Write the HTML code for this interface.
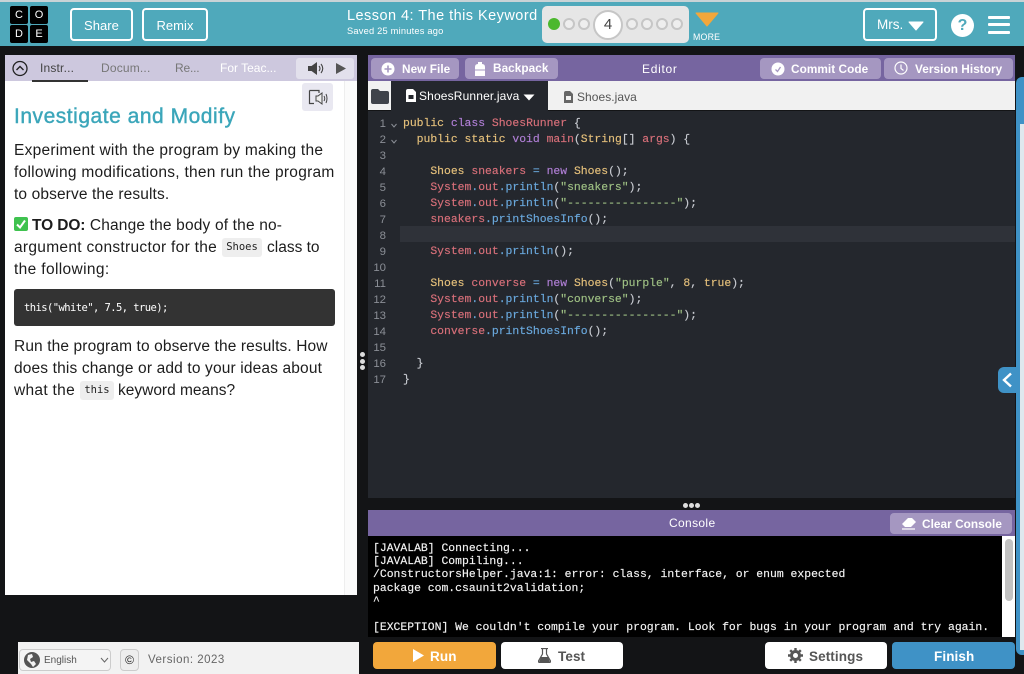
<!DOCTYPE html>
<html><head><meta charset="utf-8">
<style>
html,body{margin:0;padding:0;width:1024px;height:674px;overflow:hidden;background:#131416}
body{position:relative;font-family:"Liberation Sans",sans-serif}
.a,.t{position:absolute}
.t{white-space:nowrap}
.btn{position:absolute;border:2px solid #fff;border-radius:4px;box-sizing:border-box;color:#fff;text-align:center;font-size:13px;letter-spacing:.05px}
.p{position:absolute;background:#a597c1;border-radius:4px;color:#fff;font-weight:bold;font-size:11.8px;letter-spacing:.05px;white-space:nowrap}
.body{font-size:15.5px;color:#1d1d1d;left:14px;line-height:18px}
.code{font:11.4px/16px "Liberation Mono",monospace;white-space:pre;position:absolute;left:403px;height:16px;-webkit-text-stroke:.15px}
.n{font:11.4px/16px "Liberation Sans",sans-serif;color:#8b8f96;position:absolute;left:372px;width:14px;text-align:right}
.k{color:#e5c07b}.v{color:#b07fd6}.r{color:#d9707a}.b{color:#6aa9de}.g{color:#9fc184}.w{color:#c9ccd2}
.ink{font:11.42px/13.2px "Liberation Mono",monospace;color:#f4f4f4;white-space:pre;position:absolute;left:373px;top:542px;-webkit-text-stroke:.15px}
.dot{position:absolute;top:18px;width:8px;height:8px;border-radius:50%;background:#eee;border:2px solid #c6c6c6}
.sq{position:absolute;width:18px;height:18px;background:#000;border-radius:2px;color:#fff;font-size:11px;text-align:center;line-height:18px}
.bar{position:absolute;left:988px;width:22px;height:3px;background:#fff;border-radius:1px}
.tab{top:61px;font-size:12px;letter-spacing:.18px;line-height:15px}
.bb{top:649px;font-size:13.5px;font-weight:bold;letter-spacing:.1px;line-height:16px}
.grip{position:absolute;width:5px;height:5px;border-radius:50%;background:#ddd}
</style></head><body>

<!-- header -->
<div class="a" style="left:0;top:0;width:1024px;height:2px;background:#c8d3d6"></div>
<div class="a" style="left:0;top:2px;width:1024px;height:44px;background:#4fa9bb"></div>
<div class="sq" style="left:10px;top:6px">C</div>
<div class="sq" style="left:30px;top:6px">O</div>
<div class="sq" style="left:10px;top:25px">D</div>
<div class="sq" style="left:30px;top:25px">E</div>
<div class="btn" style="left:70px;top:8px;width:63px;height:33px;line-height:31px">Share</div>
<div class="btn" style="left:142px;top:8px;width:66px;height:33px;line-height:31px">Remix</div>
<div class="t" style="left:347px;top:7px;color:#fff;font-size:14.5px;letter-spacing:.46px;line-height:18px">Lesson 4: The this Keyword</div>
<div class="t" style="left:347px;top:25px;color:#fff;font-size:9.3px;letter-spacing:.2px;line-height:13px">Saved 25 minutes ago</div>
<div class="a" style="left:542px;top:6px;width:147px;height:37px;background:#e6e6e6;border-radius:5px"></div>
<div class="a" style="left:548px;top:18px;width:12px;height:12px;border-radius:50%;background:#4cb82e"></div>
<div class="dot" style="left:563px"></div>
<div class="dot" style="left:578px"></div>
<div class="a" style="left:593px;top:10px;width:26px;height:26px;border-radius:50%;background:#fff;border:2px solid #c6c6c6;text-align:center;font-size:15px;line-height:26px;color:#444">4</div>
<div class="dot" style="left:626px"></div>
<div class="dot" style="left:641px"></div>
<div class="dot" style="left:656px"></div>
<div class="dot" style="left:671px"></div>
<svg class="a" style="left:695px;top:12px" width="24" height="15"><path d="M1 1H23L12 14Z" fill="#f2a73b" stroke="#f2a73b" stroke-linejoin="round"/></svg>
<div class="t" style="left:693px;top:31px;color:#fff;font-size:8.8px;letter-spacing:.2px;line-height:12px">MORE</div>
<div class="btn" style="left:863px;top:8px;width:74px;height:33px"></div>
<div class="t" style="left:877px;top:16px;color:#fff;font-size:13.5px;line-height:17px">Mrs.</div>
<svg class="a" style="left:908px;top:21px" width="16" height="10"><path d="M1 1H15L8 9Z" fill="#fff" stroke="#fff" stroke-linejoin="round"/></svg>
<div class="a" style="left:951px;top:14px;width:23px;height:23px;border-radius:50%;background:#fff;color:#4fa9bb;font-weight:bold;font-size:16px;text-align:center;line-height:23px">?</div>
<div class="bar" style="top:16px"></div>
<div class="bar" style="top:23px"></div>
<div class="bar" style="top:31px"></div>

<!-- left panel -->
<div class="a" style="left:5px;top:55px;width:352px;height:540px;background:#fff"></div>
<div class="a" style="left:344px;top:81px;width:13px;height:514px;background:#fbfbfb;border-left:1px solid #eee;box-sizing:border-box"></div>
<div class="a" style="left:5px;top:55px;width:352px;height:26px;background:#cdc8de"></div>
<svg class="a" style="left:12px;top:60px" width="17" height="17"><circle cx="8" cy="8.5" r="7" fill="none" stroke="#222" stroke-width="1.3"/><path d="M4.5 10L8 6.5 11.5 10" fill="none" stroke="#222" stroke-width="1.4"/></svg>
<div class="t tab" style="left:40px;color:#444">Instr...</div>
<div class="a" style="left:32px;top:80px;width:56px;height:2px;background:#333"></div>
<div class="t tab" style="left:101px;color:#777">Docum...</div>
<div class="t tab" style="left:175px;color:#777;letter-spacing:-.2px">Re...</div>
<div class="t tab" style="left:220px;color:#fff;letter-spacing:0">For Teac...</div>
<div class="a" style="left:296px;top:58px;width:58px;height:21px;background:#e2e0ec;border-radius:3px"></div>
<svg class="a" style="left:307px;top:60px" width="40" height="17"><path d="M1 6H4.5L10 2V15L4.5 11H1Z" fill="#444"/><path d="M12 6Q14 8.5 12 11M14 4Q17.5 8.5 14 13" fill="none" stroke="#444" stroke-width="1.1"/><path d="M29 3L39 8.5 29 14Z" fill="#555"/></svg>
<div class="a" style="left:302px;top:83px;width:31px;height:28px;background:#e9e8f1;border-radius:3px"></div>
<svg class="a" style="left:308px;top:89px" width="20" height="17"><path d="M1.5 1.5H11V4M6 14.5H1.5V1.5" fill="none" stroke="#444" stroke-width="1.2"/><path d="M8 7H10L14 4V15L10 12H8Z" fill="#eee" stroke="#444"/><path d="M16 7Q17.5 9.5 16 12M18 5Q20 9.5 18 14" fill="none" stroke="#444"/></svg>

<div class="t" style="left:14px;top:104px;font-size:21px;color:#3ba6ba;letter-spacing:.52px;line-height:26px;-webkit-text-stroke:.4px #3ba6ba">Investigate and Modify</div>
<div class="t body" style="top:142px;letter-spacing:.25px">Experiment with the program by making the</div>
<div class="t body" style="top:164px;letter-spacing:.27px">following modifications, then run the program</div>
<div class="t body" style="top:186px;letter-spacing:.12px">to observe the results.</div>
<svg class="a" style="left:14px;top:217px" width="14" height="14"><rect width="14" height="14" rx="2" fill="#3fc24f"/><path d="M3 7.5L6 10.5 11 3.5" fill="none" stroke="#fff" stroke-width="2"/></svg>
<div class="t body" style="left:32px;top:217px;letter-spacing:.17px"><b style="letter-spacing:-.1px">TO DO:</b> Change the body of the no-</div>
<div class="t body" style="top:239px;letter-spacing:.3px">argument constructor for the</div>
<div class="a" style="left:222px;top:238px;width:40px;height:19px;background:#eee;border-radius:3px;font:10.5px/19px 'DejaVu Sans Mono',monospace;color:#222;text-align:center">Shoes</div>
<div class="t body" style="left:267px;top:239px">class to</div>
<div class="t body" style="top:261px;letter-spacing:.36px">the following:</div>
<div class="a" style="left:14px;top:289px;width:321px;height:37px;background:#333;border-radius:3px"></div>
<div class="t" style="left:24px;top:301px;font:10.5px/14px 'DejaVu Sans Mono',monospace;color:#fff;letter-spacing:-.57px">this("white", 7.5, true);</div>
<div class="t body" style="top:338px;letter-spacing:.12px">Run the program to observe the results. How</div>
<div class="t body" style="top:360px;letter-spacing:.15px">does this change or add to your ideas about</div>
<div class="t body" style="top:382px;letter-spacing:.3px">what the</div>
<div class="a" style="left:80px;top:381px;width:34px;height:19px;background:#eee;border-radius:3px;font:10.5px/19px 'DejaVu Sans Mono',monospace;color:#222;text-align:center">this</div>
<div class="t body" style="left:118px;top:382px">keyword means?</div>

<!-- splitter -->
<div class="grip" style="left:360px;top:352px"></div>
<div class="grip" style="left:360px;top:359px"></div>
<div class="grip" style="left:360px;top:365px"></div>

<!-- footer left -->
<div class="a" style="left:18px;top:642px;width:341px;height:32px;background:#f2f2f2"></div>
<div class="a" style="left:19px;top:649px;width:92px;height:22px;background:#f4f4f4;border:1px solid #ccc;border-radius:4px;box-sizing:border-box"></div>
<svg class="a" style="left:24px;top:652px" width="16" height="16"><circle cx="8" cy="8" r="8" fill="#555"/><path d="M4 3L8 2 9 5 6 7 7 10 10 9 12 12 9 15 7 12 3 8Z" fill="#f2f2f2"/></svg>
<div class="t" style="left:44px;top:654px;font-size:10px;color:#555;line-height:14px">English</div>
<svg class="a" style="left:100px;top:657px" width="9" height="6"><path d="M1 1L4.5 5 8 1" fill="none" stroke="#666"/></svg>
<div class="a" style="left:120px;top:649px;width:19px;height:22px;background:#eee;border:1px solid #ccc;border-radius:4px;box-sizing:border-box;font-size:12px;line-height:21px;text-align:center;color:#222">©</div>
<div class="t" style="left:148px;top:653px;font-size:11.5px;color:#666;letter-spacing:.5px;line-height:15px">Version: 2023</div>

<!-- editor header -->
<div class="a" style="left:368px;top:55px;width:647px;height:26px;background:#7665a0"></div>
<div class="p" style="left:371px;top:58px;width:88px;height:21px;line-height:23px;text-indent:31px">New File</div>
<svg class="a" style="left:381px;top:62px" width="14" height="14"><circle cx="7" cy="7" r="6.5" fill="#fff"/><path d="M7 3.5V10.5M3.5 7H10.5" stroke="#a597c1" stroke-width="1.6"/></svg>
<div class="p" style="left:465px;top:58px;width:93px;height:21px;line-height:21px;text-indent:28px">Backpack</div>
<svg class="a" style="left:474px;top:62px" width="12" height="14"><path d="M1 5Q1 2 4 2V0H8V2Q11 2 11 5V14H1Z" fill="#fff"/><path d="M1 8H11" stroke="#a597c1"/></svg>
<div class="t" style="left:642px;top:62px;font-size:12px;color:#fff;letter-spacing:.7px;line-height:15px">Editor</div>
<div class="p" style="left:760px;top:58px;width:121px;height:21px;line-height:23px;text-indent:31px">Commit Code</div>
<svg class="a" style="left:771px;top:62px" width="14" height="14"><circle cx="7" cy="7" r="6.5" fill="#fff"/><path d="M4.5 7.5L6.5 9.5 9.5 5" fill="none" stroke="#a597c1" stroke-width="1.3"/></svg>
<div class="p" style="left:884px;top:58px;width:129px;height:21px;line-height:23px;text-indent:31px">Version History</div>
<svg class="a" style="left:894px;top:61px" width="14" height="14"><circle cx="7" cy="7" r="6" fill="none" stroke="#fff" stroke-width="1.2"/><path d="M7 3.5V7.5L9.5 9.5" fill="none" stroke="#fff" stroke-width="1.2"/></svg>

<!-- tabs -->
<div class="a" style="left:368px;top:81px;width:647px;height:29px;background:#f1f1f1"></div>
<div class="a" style="left:391px;top:81px;width:157px;height:30px;background:#24272d"></div>
<svg class="a" style="left:371px;top:88px" width="18" height="16"><path d="M0 3Q0 1 2 1H7L9 3H16Q18 3 18 5V14Q18 16 16 16H2Q0 16 0 14Z" fill="#3f434a"/></svg>
<svg class="a" style="left:406px;top:89px" width="10" height="13"><path d="M0 2Q0 0 2 0H7L10 3V13H0Z" fill="#fff"/><rect x="2.5" y="6" width="5" height="4" fill="#24272d"/></svg>
<div class="t" style="left:419px;top:89px;font-size:12px;color:#fff;letter-spacing:.15px;line-height:15px">ShoesRunner.java</div>
<svg class="a" style="left:523px;top:94px" width="12" height="7"><path d="M.5.5H11.5L6 6.5Z" fill="#fff"/></svg>
<svg class="a" style="left:564px;top:91px" width="9" height="12"><path d="M0 2Q0 0 2 0H6L9 3V12H0Z" fill="#666"/><rect x="2" y="5" width="5" height="4" fill="#f1f1f1"/></svg>
<div class="t" style="left:577px;top:90px;font-size:12px;color:#555;letter-spacing:.05px;line-height:15px">Shoes.java</div>

<!-- code area -->
<div class="a" style="left:368px;top:111px;width:647px;height:387px;background:#24272d"></div>
<div class="a" style="left:400px;top:226px;width:615px;height:16px;background:#2f3239"></div>

<div class="n" style="top:116px">1</div><div class="n" style="top:132px">2</div><div class="n" style="top:148px">3</div><div class="n" style="top:164px">4</div><div class="n" style="top:180px">5</div><div class="n" style="top:196px">6</div><div class="n" style="top:212px">7</div><div class="n" style="top:228px">8</div><div class="n" style="top:244px">9</div><div class="n" style="top:260px">10</div><div class="n" style="top:276px">11</div><div class="n" style="top:292px">12</div><div class="n" style="top:308px">13</div><div class="n" style="top:324px">14</div><div class="n" style="top:340px">15</div><div class="n" style="top:356px">16</div><div class="n" style="top:372px">17</div>
<svg class="a" style="left:391px;top:123px" width="6" height="5"><path d="M.5 1L3 4 5.5 1" fill="none" stroke="#8b8f96"/></svg>
<svg class="a" style="left:391px;top:139px" width="6" height="5"><path d="M.5 1L3 4 5.5 1" fill="none" stroke="#8b8f96"/></svg>

<div class="code w" style="top:116px"><span class="k">public</span> <span class="v">class</span> <span class="r">ShoesRunner</span> {</div>
<div class="code w" style="top:132px">  <span class="k">public static</span> <span class="v">void</span> <span class="r">main</span>(<span class="k">String</span>[] <span class="r">args</span>) {</div>
<div class="code w" style="top:164px">    <span class="k">Shoes</span> <span class="r">sneakers</span> <span class="b">=</span> <span class="v">new</span> <span class="k">Shoes</span>();</div>
<div class="code w" style="top:180px">    <span class="r">System</span><span class="b">.</span><span class="r">out</span><span class="b">.println</span>(<span class="g">"sneakers"</span>);</div>
<div class="code w" style="top:196px">    <span class="r">System</span><span class="b">.</span><span class="r">out</span><span class="b">.println</span>(<span class="g">"----------------"</span>);</div>
<div class="code w" style="top:212px">    <span class="r">sneakers</span><span class="b">.printShoesInfo</span>();</div>
<div class="code w" style="top:244px">    <span class="r">System</span><span class="b">.</span><span class="r">out</span><span class="b">.println</span>();</div>
<div class="code w" style="top:276px">    <span class="k">Shoes</span> <span class="r">converse</span> <span class="b">=</span> <span class="v">new</span> <span class="k">Shoes</span>(<span class="g">"purple"</span>, <span class="k">8</span>, <span class="k">true</span>);</div>
<div class="code w" style="top:292px">    <span class="r">System</span><span class="b">.</span><span class="r">out</span><span class="b">.println</span>(<span class="g">"converse"</span>);</div>
<div class="code w" style="top:308px">    <span class="r">System</span><span class="b">.</span><span class="r">out</span><span class="b">.println</span>(<span class="g">"----------------"</span>);</div>
<div class="code w" style="top:324px">    <span class="r">converse</span><span class="b">.printShoesInfo</span>();</div>
<div class="code w" style="top:356px">  }</div>
<div class="code w" style="top:372px">}</div>

<!-- h splitter -->
<div class="grip" style="left:683px;top:503px"></div>
<div class="grip" style="left:689px;top:503px"></div>
<div class="grip" style="left:695px;top:503px"></div>

<!-- console -->
<div class="a" style="left:368px;top:510px;width:647px;height:26px;background:#7665a0"></div>
<div class="t" style="left:669px;top:516px;font-size:12px;color:#fff;letter-spacing:.35px;line-height:15px">Console</div>
<div class="p" style="left:890px;top:513px;width:122px;height:21px;line-height:23px;text-indent:32px">Clear Console</div>
<svg class="a" style="left:901px;top:517px" width="16" height="13"><path d="M1 7L7 1H11L15 5 10 10H4Z" fill="#fff"/><path d="M1 12H14" stroke="#fff" stroke-width="1.2"/></svg>
<div class="a" style="left:368px;top:536px;width:634px;height:101px;background:#000"></div>
<div class="a" style="left:1002px;top:536px;width:13px;height:101px;background:#fff"></div>
<div class="a" style="left:1005px;top:539px;width:8px;height:62px;background:#c2c2c2;border-radius:4px"></div>
<div class="ink">[JAVALAB] Connecting...
[JAVALAB] Compiling...
/ConstructorsHelper.java:1: error: class, interface, or enum expected
package com.csaunit2validation;
^

[EXCEPTION] We couldn't compile your program. Look for bugs in your program and try again.</div>

<!-- bottom buttons -->
<div class="a" style="left:373px;top:642px;width:123px;height:27px;background:#f2a73b;border-radius:4px"></div>
<svg class="a" style="left:413px;top:649px" width="11" height="13"><path d="M0 0L11 6.5 0 13Z" fill="#fff"/></svg>
<div class="t bb" style="left:430px;color:#fff">Run</div>
<div class="a" style="left:501px;top:642px;width:122px;height:27px;background:#fff;border-radius:4px"></div>
<svg class="a" style="left:538px;top:648px" width="13" height="15"><path d="M3 .5H10M4.5 1V6L.5 13Q0 14.5 2 14.5H11Q13 14.5 12.5 13L8.5 6V1" fill="none" stroke="#555" stroke-width="1.2"/><path d="M3 9H10L12 14H1Z" fill="#555"/></svg>
<div class="t bb" style="left:558px;color:#555">Test</div>
<div class="a" style="left:765px;top:642px;width:122px;height:27px;background:#fff;border-radius:4px"></div>
<svg class="a" style="left:788px;top:648px" width="15" height="15"><circle cx="7.5" cy="7.5" r="4" fill="none" stroke="#555" stroke-width="3"/><path d="M7.5 0V15M0 7.5H15M2.2 2.2L12.8 12.8M12.8 2.2L2.2 12.8" stroke="#555" stroke-width="2.4" stroke-dasharray="2.2 10.6 2.2"/></svg>
<div class="t bb" style="left:809px;color:#555">Settings</div>
<div class="a" style="left:892px;top:642px;width:123px;height:27px;background:#3f92c6;border-radius:4px"></div>
<div class="t bb" style="left:934px;color:#fff">Finish</div>

<!-- right edge -->
<div class="a" style="left:1016px;top:77px;width:8px;height:578px;background:#3f92c6;border-radius:6px 0 0 6px"></div>
<div class="a" style="left:1020px;top:124px;width:4px;height:526px;background:#dfe8ee"></div>
<div class="a" style="left:998px;top:367px;width:18px;height:26px;background:#3f92c6;border-radius:6px 0 0 6px"></div>
<svg class="a" style="left:1001px;top:372px" width="12" height="16"><path d="M10 1.5L3 8 10 14.5" fill="none" stroke="#fff" stroke-width="2.4"/></svg>
</body></html>
